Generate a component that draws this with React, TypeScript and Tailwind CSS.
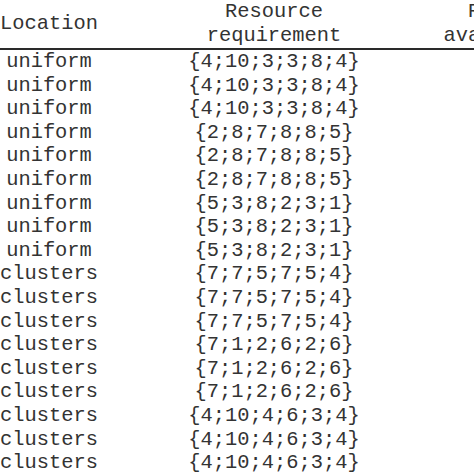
const GROUPS: [string, string][] = [
  ["uniform", "{4;10;3;3;8;4}"],
  ["uniform", "{2;8;7;8;8;5}"],
  ["uniform", "{5;3;8;2;3;1}"],
  ["clusters", "{7;7;5;7;5;4}"],
  ["clusters", "{7;1;2;6;2;6}"],
  ["clusters", "{4;10;4;6;3;4}"],
]

// each configuration is repeated three times in the table
const ROWS = GROUPS.flatMap((g) => [g, g, g])

export default function App() {
  return (
    <div className="w-[474px] h-[474px] overflow-hidden bg-white text-[#333] font-['Courier_New',_'Nimbus_Mono_PS',_'FreeMono',_'Liberation_Mono',_monospace] text-[20.4px]">
      <div className="w-[584px]">
        <div className="grid grid-cols-[98px_352px_134px] leading-[24px] border-b-2 border-[#2a2a2a]">
          <div className="flex items-center justify-center whitespace-nowrap">Location</div>
          <div className="flex flex-col items-center whitespace-nowrap">
            <span>Resource</span>
            <span>requirement</span>
          </div>
          <div className="flex flex-col items-center whitespace-nowrap">
            <span>Resource</span>
            <span>availability</span>
          </div>
        </div>
        {ROWS.map(([loc, req], i) => (
          <div key={i} className="grid grid-cols-[98px_352px_134px] leading-[23.6px]">
            <div className="text-center whitespace-nowrap">{loc}</div>
            <div className="text-center whitespace-nowrap">{req}</div>
            <div />
          </div>
        ))}
      </div>
    </div>
  )
}
